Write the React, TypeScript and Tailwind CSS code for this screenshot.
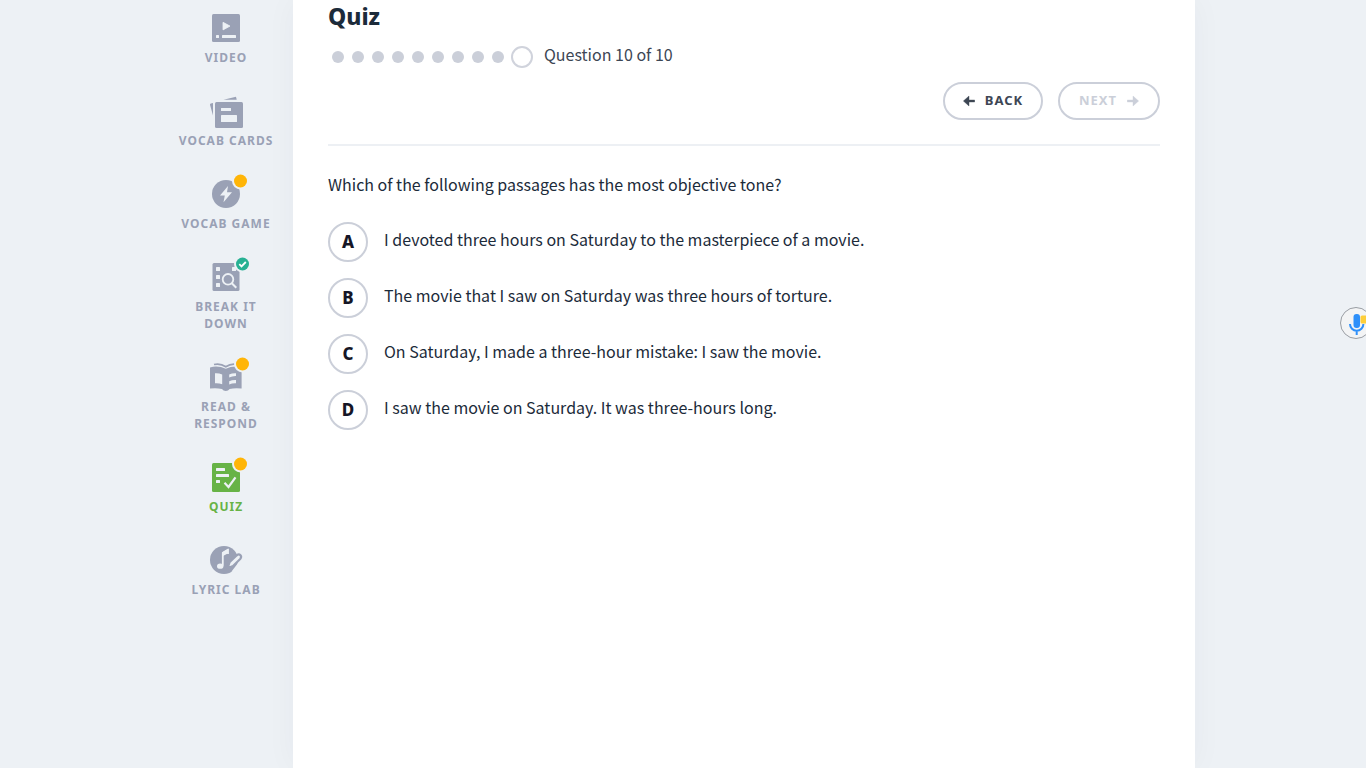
import { useState } from "react";
import type { ReactNode } from "react";

interface NavItem {
    id: string,
    label: string,
    icon: ReactNode,
    badge?: "dot" | "check",
    badgeX?: number
}

const navItems: NavItem[] = [
    {
        id: "video",
        label: "Video",
        icon: (
            <>
                <rect x="2" y="2" width="28" height="28" rx="1.5" fill="currentColor"/>
                <path d="M13 10.3v7.6l7-3.8z" fill="#edf1f5" stroke="#edf1f5" strokeWidth="0.8" strokeLinejoin="round"/>
                <rect x="6" y="23" width="3" height="3" rx="0.5" fill="#edf1f5"/>
                <rect x="12" y="23" width="14" height="3" rx="0.5" fill="#edf1f5"/>
            </>
        )
    },
    {
        id: "vocab-cards",
        label: "Vocab Cards",
        icon: (
            <>
                <path d="M13.5 4.8 25 1.9q1-.2 1.2.7l.5 2.2zM0 9.7q-.1-1 .8-1.2l2.2-.6v12.7z" fill="currentColor"/>
                <rect x="5" y="7" width="28" height="26" rx="1.5" fill="currentColor"/>
                <rect x="11" y="13" width="10" height="3" rx="0.3" fill="#edf1f5"/>
                <rect x="11" y="20" width="16" height="7" rx="0.5" fill="#edf1f5"/>
            </>
        )
    },
    {
        id: "vocab-game",
        label: "Vocab Game",
        badge: "dot",
        badgeX: 30.5,
        icon: (
            <>
                <circle cx="16" cy="16" r="14" fill="currentColor"/>
                <path d="M18 8 10 17.5h4.8l-1.3 6.7 8.5-9.9h-5z" fill="#edf1f5"/>
            </>
        )
    },
    {
        id: "break-it-down",
        label: "Break It Down",
        badge: "check",
        badgeX: 32.5,
        icon: (
            <>
                <rect x="2.5" y="2" width="27" height="28" rx="1.5" fill="currentColor"/>
                <rect x="6" y="6" width="4" height="4" rx="0.5" fill="#edf1f5"/>
                <rect x="6" y="14" width="4" height="4" rx="0.5" fill="#edf1f5"/>
                <rect x="6" y="22" width="4" height="4" rx="0.5" fill="#edf1f5"/>
                <rect x="22" y="6" width="4" height="4" rx="0.5" fill="#edf1f5"/>
                <circle cx="18" cy="18.3" r="5.3" fill="none" stroke="#edf1f5" strokeWidth="1.8"/>
                <path d="m21.8 22.2 4.5 4.6" stroke="#edf1f5" strokeWidth="2"/>
            </>
        )
    },
    {
        id: "read-respond",
        label: "Read & Respond",
        badge: "dot",
        badgeX: 32.5,
        icon: (
            <>
                <path d="M0 6.4q8-2.2 15.8 1.4 7.7-3.6 15.8-1.4v21.2q-6.2-1-12 .4-1.3 2-3.8 2t-3.8-2q-6-1.4-12-.4z" fill="currentColor"/>
                <path d="M4 3.5q6.5-1.5 11.8 2.3Q21 2 27.5 3.5" fill="none" stroke="currentColor" strokeWidth="1.7"/>
                <path d="M5 12.2q3.7-.3 7.2 1.2v9.9q-3.5-1.3-7.2-1z" fill="#edf1f5"/>
                <path d="M19.2 13.5q3-1.5 6.8-1.3v2.9q-3.8-.1-6.8 1.5zM19.2 20.2q3-1.5 6.8-1.3v3.3q-3.8-.2-6.8 1.3z" fill="#edf1f5"/>
            </>
        )
    },
    {
        id: "quiz",
        label: "Quiz",
        badge: "dot",
        badgeX: 30.5,
        icon: (
            <>
                <rect x="2" y="2" width="28" height="29" rx="1.5" fill="currentColor"/>
                <rect x="6" y="7" width="9" height="3" rx="0.5" fill="#edf1f5"/>
                <rect x="6" y="13" width="13" height="3" rx="0.5" fill="#edf1f5"/>
                <rect x="6" y="19" width="4" height="3" rx="0.5" fill="#edf1f5"/>
                <path d="m14.5 21.8 4 4.2 7-9.7" fill="none" stroke="#edf1f5" strokeWidth="2.2"/>
            </>
        )
    },
    {
        id: "lyric-lab",
        label: "Lyric Lab",
        icon: (
            <>
                <circle cx="14" cy="16" r="14" fill="currentColor"/>
                <path d="m21.5 27.5 7-9 4 2-5 9z" fill="#edf1f5"/>
                <path d="m19.5 18.3 7.3-7q2-1.7 3.7 0 1.4 1.8-.3 3.7l-7.2 7-5.5 2.3z" fill="#edf1f5" stroke="currentColor" strokeWidth="2.2" strokeLinejoin="round"/>
                <path d="M12.8 21.8V9l5.2-3v4" fill="none" stroke="#edf1f5" strokeWidth="1.8"/>
                <path d="m12 8.3 6.2-3.8v4.8L13 12z" fill="#edf1f5"/>
                <ellipse cx="10.2" cy="22.2" rx="3.2" ry="2.6" fill="#edf1f5"/>
            </>
        )
    }
];

const answers = [
    { letter: "A", text: "I devoted three hours on Saturday to the masterpiece of a movie." },
    { letter: "B", text: "The movie that I saw on Saturday was three hours of torture." },
    { letter: "C", text: "On Saturday, I made a three-hour mistake: I saw the movie." },
    { letter: "D", text: "I saw the movie on Saturday. It was three-hours long." }
];

const dots = [1, 2, 3, 4, 5, 6, 7, 8, 9];

const ArrowIcon = ({ className = "" }: { className?: string }) => (
    <svg aria-hidden="true" viewBox="0 0 12 12" className={`w-3 h-3 ${className}`}>
        <path d="M6 1v4h5.4q.4 0 .4.4v1.2q0 .4-.4.4H6v4L.4 6z" fill="currentColor" stroke="currentColor" strokeWidth="0.4" strokeLinejoin="round"/>
    </svg>
);

const StepLink = ({ item, active }: { item: NavItem, active: boolean }) => (
    <a href={`#${item.id}`} className={`flex flex-col items-center gap-[5px] ${active ? "text-[#67b346]" : "text-[#9aa1b5]"}`}>
        <svg aria-hidden="true" viewBox="0 0 32 32" className="w-8 h-8 overflow-visible">
            {item.icon}
            {item.badge && (
                <>
                    <circle cx={item.badgeX} cy="3" r="8.5" fill="#edf1f5"/>
                    <circle cx={item.badgeX} cy="3" r="6.5" fill={item.badge == "check" ? "#27b193" : "#ffb507"}/>
                </>
            )}
            {item.badge == "check" && <path d="m29.3 3.2 2.2 2.2 4.3-4.4" fill="none" stroke="#fff" strokeWidth="1.8"/>}
        </svg>
        <span className="px-1 text-center font-['Noto_Sans',sans-serif] text-[12px] leading-[17px] font-bold tracking-[1px] uppercase">{item.label}</span>
    </a>
);

const App = () => {

    const [selected, setSelected] = useState<string | null>(null);

    return (
        <div className="min-h-screen overflow-x-hidden bg-[#edf1f5] font-['Noto_Sans_CJK_SC',sans-serif] text-[#1c2b3a]">
            <div className="flex max-w-5xl min-h-screen mx-auto">
                <nav aria-label="Lesson steps" className="flex flex-col gap-[29px] w-[110px] mr-3 pt-3 shrink-0">
                    {navItems.map((item) => <StepLink key={item.id} item={item} active={item.id == "quiz"}/>)}
                </nav>

                <main className="flex-1 px-[35px] bg-white shadow-[0_0_30px_rgba(28,60,80,0.04)]">
                    <h1 className="font-['Noto_Sans',sans-serif] text-[23px] leading-8 font-extrabold">Quiz</h1>

                    <div className="flex items-center h-[22px] mt-[14px]">
                        <ol className="flex items-center" aria-label="Progress">
                            {dots.map((dot) => (
                                <li key={dot} className="flex justify-center w-5"><span className="w-3 h-3 rounded-full bg-[#cbcfd9]"></span></li>
                            ))}
                            <li className="flex justify-center w-7"><span className="w-[22px] h-[22px] rounded-full border-2 border-[#d0d3dc]"></span></li>
                        </ol>
                        <p className="ml-2 pb-[6px] text-base text-[#3d4654]">Question 10 of 10</p>
                    </div>

                    <div className="flex justify-end gap-[15px] mt-[14px] pb-6 border-b-2 border-[#edf0f4] font-['Noto_Sans',sans-serif] text-[13px] font-bold tracking-[1px]">
                        <button className="flex items-center justify-center gap-[10px] w-[100px] h-[38px] rounded-full border-2 border-[#cbcfd9] text-[#3d4654]">
                            <ArrowIcon/>BACK
                        </button>
                        <button disabled className="flex items-center justify-center gap-[10px] w-[102px] h-[38px] rounded-full border-2 border-[#cbcfd9] text-[#cbcfd9]">
                            NEXT<ArrowIcon className="rotate-180"/>
                        </button>
                    </div>

                    <p className="pt-[26px] text-base">Which of the following passages has the most objective tone?</p>

                    <div className="flex flex-col items-start gap-4 mt-[26px] pb-10">
                        {answers.map(({ letter, text }) => (
                            <button key={letter} aria-pressed={selected == letter} onClick={() => setSelected(letter)} className="flex items-center gap-4 text-left">
                                <span className={`flex items-center justify-center w-10 h-10 shrink-0 rounded-full border-2 font-['Noto_Sans',sans-serif] text-[17px] font-extrabold text-[#151626] ${selected == letter ? "border-[#67b346]" : "border-[#cbcfd9]"}`}>{letter}</span>
                                <span className="pb-[6px] text-base">{text}</span>
                            </button>
                        ))}
                    </div>
                </main>
            </div>

            <button aria-label="Voice typing" className="fixed top-[307px] -right-[6px] flex items-center justify-center w-8 h-8 rounded-full border border-[#999da3] bg-[#f3f4f5]">
                <svg aria-hidden="true" viewBox="0 0 24 24" className="w-6 h-6">
                    <rect x="9.5" y="3" width="6.5" height="14" rx="3" fill="#2e90fa"/>
                    <path d="M6 13a6.7 6.7 0 0 0 13.4 0M12.7 19.5v5" fill="none" stroke="#2e90fa" strokeWidth="2"/>
                    <rect x="16.5" y="4.5" width="8" height="8" rx="1.5" fill="#fdce3b"/>
                </svg>
            </button>
        </div>
    );
}

export default App;
